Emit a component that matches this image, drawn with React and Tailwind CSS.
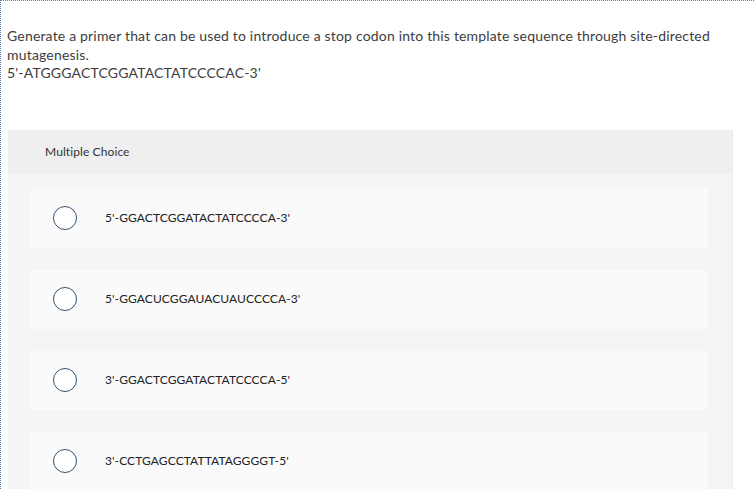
export default function App() {
  const options = [
    "5'-GGACTCGGATACTATCCCCA-3'",
    "5'-GGACUCGGAUACUAUCCCCA-3'",
    "3'-GGACTCGGATACTATCCCCA-5'",
    "3'-CCTGAGCCTATTATAGGGGT-5'",
  ];
  return (
    <div className="w-[754px] h-[489px] overflow-hidden bg-white border-t border-l border-dotted border-[#5b7aa6]" style={{ fontFamily: "Lato, 'Open Sans', sans-serif" }}>
      <div className="pl-[6px] pt-[26px] pr-[30px] text-[14px] leading-[18.5px] text-[#3d3d3d] tracking-[0.18px]">
        <p>Generate a primer that can be used to introduce a stop codon into this template sequence through site-directed mutagenesis.</p>
        <p>5'-ATGGGACTCGGATACTATCCCCAC-3'</p>
      </div>
      <div className="ml-[7px] mt-[47px] w-[725px] bg-[#f5f5f5] border-r border-[#ebebeb]">
        <div className="h-[44px] bg-[#efefef] flex items-center pl-[37px] text-[12px] tracking-[0.1px] text-[#333]">
          Multiple Choice
        </div>
        <div className="pt-[15px] pl-[22px] pr-[24px] flex flex-col gap-[22px]">
          {options.map((o) => (
            <div key={o} className="h-[59px] bg-[#fafafa] flex items-center pl-[23px] shrink-0">
              <div className="w-[24px] h-[24px] rounded-full border-[1.5px] border-[#34506f] bg-white shrink-0" />
              <span className="ml-[28px] text-[12px] text-[#222] tracking-[0.1px]">{o}</span>
            </div>
          ))}
        </div>
      </div>
    </div>
  );
}
